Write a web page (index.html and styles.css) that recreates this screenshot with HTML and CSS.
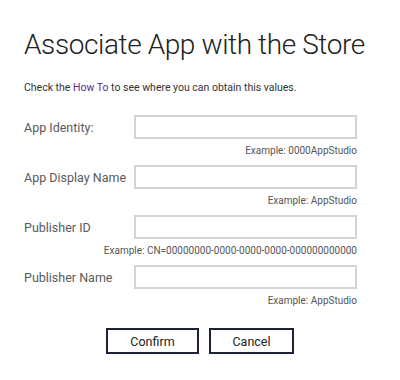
FILE: index.html
```html
<!DOCTYPE html>
<html lang="en">
<head>
    <meta charset="UTF-8">
    <meta name="viewport" content="width=device-width, initial-scale=1.0">
    <title>Associate App with the Store</title>
    <link rel="stylesheet" href="styles.css">
</head>
<body>
    <div class="dialog">
        <h1>Associate App with the Store</h1>
        <p class="intro">Check the <a href="#">How To</a> to see where you can obtain this values.</p>

        <form class="store-form">
            <div class="form-row">
                <label for="appId">App Identity:</label>
                <input type="text" id="appId">
            </div>
            <div class="example">Example: 0000AppStudio</div>

            <div class="form-row">
                <label for="displayName">App Display Name</label>
                <input type="text" id="displayName">
            </div>
            <div class="example">Example: AppStudio</div>

            <div class="form-row">
                <label for="publisherId">Publisher ID</label>
                <input type="text" id="publisherId">
            </div>
            <div class="example">Example: CN=00000000-0000-0000-0000-000000000000</div>

            <div class="form-row">
                <label for="publisherName">Publisher Name</label>
                <input type="text" id="publisherName">
            </div>
            <div class="example">Example: AppStudio</div>

            <div class="actions">
                <button type="submit" class="btn-confirm">Confirm</button>
                <button type="button" class="btn-cancel">Cancel</button>
            </div>
        </form>
    </div>
</body>
</html>
```

FILE: styles.css
```css
body {
    margin: 0;
    background-color: white;
    font-family: Roboto, "Noto Sans", sans-serif;
    color: #333;
}
.dialog {
    width: 333px;
    padding: 27px 0 0 24px;
}
h1 {
    margin: 0;
    font-size: 28px;
    font-weight: 300;
    letter-spacing: -0.4px;
    line-height: 36px;
    color: #222;
    white-space: nowrap;
}
.intro {
    margin: 17px 0 0 0;
    font-size: 10.5px;
    line-height: 16px;
    color: #333;
}
.intro a {
    color: #5c2d91;
    text-decoration: none;
}
.store-form {
    margin-top: 19px;
}
.form-row {
    display: flex;
    align-items: center;
}
label {
    width: 110px;
    font-size: 12.5px;
    color: #5a5a5a;
    white-space: nowrap;
}
input {
    width: 223px;
    height: 24px;
    margin: 0;
    padding: 2px 6px;
    border: 2px solid #d4d4d4;
    box-sizing: border-box;
    font-family: inherit;
}
.example {
    margin-bottom: 4px;
    padding-top: 1px;
    text-align: right;
    font-size: 10px;
    line-height: 21px;
    color: #555;
    white-space: nowrap;
}
.actions {
    display: flex;
    justify-content: center;
    gap: 10px;
    margin-top: 17px;
    margin-left: -24px;
    width: 400px;
}
button {
    height: 26px;
    background-color: white;
    border: 2px solid #1b2236;
    font-family: inherit;
    font-size: 12.5px;
    color: #222;
    cursor: pointer;
}
.btn-confirm {
    width: 93px;
}
.btn-cancel {
    width: 85px;
}
```
